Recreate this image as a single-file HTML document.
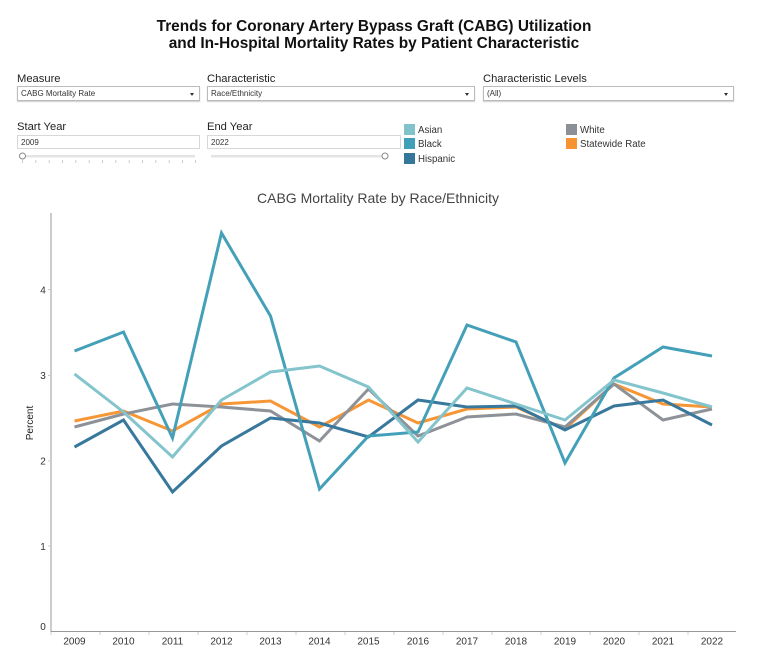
<!DOCTYPE html>
<html>
<head>
<meta charset="utf-8">
<style>
html,body{margin:0;padding:0;background:#fff}
body{width:768px;height:661px;position:relative;overflow:hidden;font-family:"Liberation Sans",Arial,sans-serif;color:#333}
#w{position:absolute;left:0;top:0;width:768px;height:661px;background:#fff;filter:blur(.3px)}
.a{position:absolute;white-space:nowrap}
.t{left:0;width:748px;text-align:center;font-weight:bold;font-size:15.4px;line-height:17px;color:#111}
.l{font-size:11.2px;line-height:14px;color:#222}
.box{box-sizing:border-box;background:#fff;border:1px solid #c8c8c8;font-size:8px;line-height:13px;padding-left:3px;color:#333}
.dd{border:1px solid #bbb;box-shadow:0 1px 1px #ccc;height:15px}
.in{height:14px;border:1px solid #d8d8d8}
.arr{position:absolute;right:5px;top:6px;width:0;height:0;border-left:2.5px solid transparent;border-right:2.5px solid transparent;border-top:3px solid #333}
.sw{position:absolute;width:11px;height:11px}
.lg{font-size:9.7px;line-height:12px;color:#333}
</style>
</head>
<body>
<div id="w">
<div class="a t" style="top:18px">Trends for Coronary Artery Bypass Graft (CABG) Utilization</div>
<div class="a t" style="top:35px">and In-Hospital Mortality Rates by Patient Characteristic</div>

<div class="a l" style="left:17px;top:72px">Measure</div>
<div class="a box dd" style="left:17px;top:86px;width:183px">CABG Mortality Rate<span class="arr"></span></div>
<div class="a l" style="left:207px;top:72px">Characteristic</div>
<div class="a box dd" style="left:207px;top:86px;width:268px">Race/Ethnicity<span class="arr"></span></div>
<div class="a l" style="left:483px;top:72px">Characteristic Levels</div>
<div class="a box dd" style="left:483px;top:86px;width:251px">(All)<span class="arr"></span></div>

<div class="a l" style="left:17px;top:120px">Start Year</div>
<div class="a box in" style="left:17px;top:135px;width:183px">2009</div>
<div class="a l" style="left:207px;top:120px">End Year</div>
<div class="a box in" style="left:207px;top:135px;width:194px">2022</div>

<svg class="a" style="left:0;top:0" width="768" height="661" xmlns="http://www.w3.org/2000/svg">
  <rect x="22" y="155" width="173" height="2.500" fill="#e4e4e4"/>
  <rect x="211" y="155" width="175" height="2.500" fill="#e4e4e4"/>
  <circle cx="22.500" cy="156" r="3" fill="#fff" stroke="#888" stroke-width="1"/>
  <circle cx="385" cy="156" r="3" fill="#fff" stroke="#888" stroke-width="1"/>
  <g stroke="#ccc" stroke-width="1">
    <path d="M22.500 160v3M35.800 160v3M49.200 160v3M62.500 160v3M75.800 160v3M89.200 160v3M102.500 160v3M115.800 160v3M129.200 160v3M142.500 160v3M155.800 160v3M169.200 160v3M182.500 160v3M195.500 160v3"/>
  </g>

  <!-- axes -->
  <path d="M51 213V631.500H736" fill="none" stroke="#999" stroke-width="1"/>
  <path d="M48 289.500h3M48 375.500h3M48 461h3M48 546h3" stroke="#ccc" stroke-width="1"/>
  <path d="M51 632v3M100 632v3M149 632v3M198 632v3M247 632v3M296 632v3M345 632v3M394 632v3M443 632v3M492 632v3M541 632v3M590 632v3M639 632v3M688 632v3" stroke="#ccc" stroke-width="1"/>

  <!-- lines -->
  <g fill="none" stroke-width="3" stroke-linejoin="miter" opacity=".98">
    <polyline stroke="#f79431" points="74.500,421 123.500,411 172.500,431 221.500,404 270.500,401 319.500,427 368.500,400 418,423 467,409 516,407 565,429 614,384 663,404 712,407"/>
    <polyline stroke="#8a9096" points="74.500,427 123.500,414 172.500,404 221.500,407 270.500,411 319.500,441 368.500,389 418,436 467,417 516,414 565,427 614,384 663,420 712,409"/>
    <polyline stroke="#35769b" points="74.500,447 123.500,420 172.500,492 221.500,446 270.500,418 319.500,423 368.500,437 418,400 467,407 516,406 565,430 614,406 663,400 712,425"/>
    <polyline stroke="#419fb8" points="74.500,351 123.500,332 172.500,438 221.500,233 270.500,316 319.500,489 368.500,436 418,432 467,325 516,342 565,463 614,378 663,347 712,356"/>
    <polyline stroke="#82c3cb" points="74.500,374 123.500,412 172.500,457 221.500,400 270.500,372 319.500,366 368.500,387 418,442 467,388 516,404 565,420 614,380 663,393 712,407"/>
  </g>

  <g font-family="Liberation Sans, Arial, sans-serif" font-size="10" fill="#333" text-anchor="middle">
    <text x="43" y="293.500">4</text>
    <text x="43" y="379">3</text>
    <text x="43" y="464.500">2</text>
    <text x="43" y="550">1</text>
    <text x="43" y="630">0</text>
    <text x="74.500" y="644.500">2009</text>
    <text x="123.500" y="644.500">2010</text>
    <text x="172.500" y="644.500">2011</text>
    <text x="221.500" y="644.500">2012</text>
    <text x="270.500" y="644.500">2013</text>
    <text x="319.500" y="644.500">2014</text>
    <text x="368.500" y="644.500">2015</text>
    <text x="418" y="644.500">2016</text>
    <text x="467" y="644.500">2017</text>
    <text x="516" y="644.500">2018</text>
    <text x="565" y="644.500">2019</text>
    <text x="614" y="644.500">2020</text>
    <text x="663" y="644.500">2021</text>
    <text x="712" y="644.500">2022</text>
    <text transform="translate(33 423) rotate(-90)" font-size="10" fill="#222">Percent</text>
    <text x="378" y="203" font-size="14" fill="#444">CABG Mortality Rate by Race/Ethnicity</text>
  </g>
</svg>

<div class="sw" style="left:404px;top:124px;background:#82c3cb"></div>
<div class="a lg" style="left:418px;top:125px">Asian</div>
<div class="sw" style="left:404px;top:138px;background:#419fb8"></div>
<div class="a lg" style="left:418px;top:139px">Black</div>
<div class="sw" style="left:404px;top:153px;background:#35769b"></div>
<div class="a lg" style="left:418px;top:154px">Hispanic</div>
<div class="sw" style="left:566px;top:124px;background:#8a9096"></div>
<div class="a lg" style="left:580px;top:125px">White</div>
<div class="sw" style="left:566px;top:138px;background:#f79431"></div>
<div class="a lg" style="left:580px;top:139px">Statewide Rate</div>
</div>
</body>
</html>
